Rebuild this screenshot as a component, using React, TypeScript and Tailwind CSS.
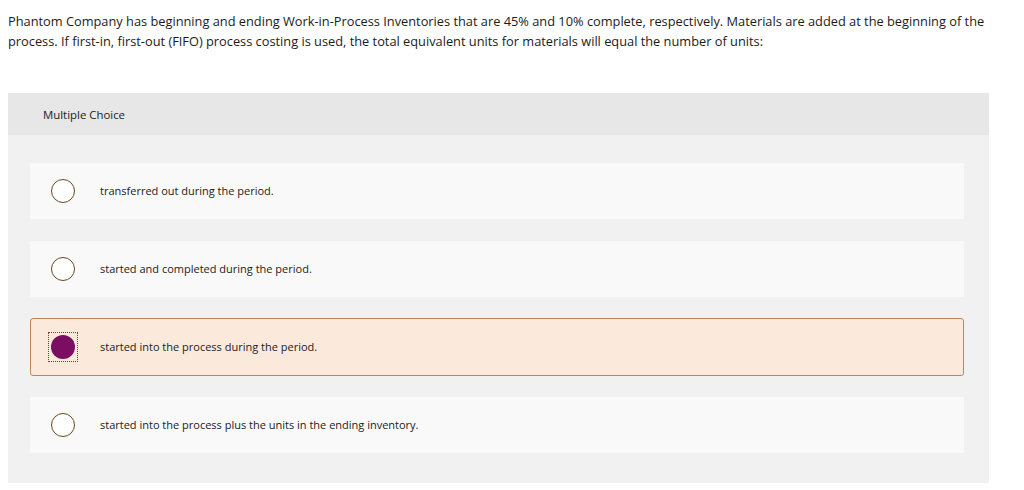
const options = [
  { text: "transferred out during the period.", selected: false },
  { text: "started and completed during the period.", selected: false },
  { text: "started into the process during the period.", selected: true },
  { text: "started into the process plus the units in the ending inventory.", selected: false },
];

function Radio({ selected }: { selected: boolean }) {
  if (selected) {
    return (
      <div className="-mx-[2px] flex h-[30px] w-[30px] items-center justify-center border border-dotted border-[#8a3030]">
        <div className="h-[24px] w-[24px] rounded-full bg-[#7b0d62]" />
      </div>
    );
  }
  return (
    <div className="flex h-[26px] w-[26px] items-center justify-center">
      <div className="h-[24px] w-[24px] rounded-full border-[1.5px] border-[#6a4520] bg-white" />
    </div>
  );
}

export default function App() {
  return (
    <div className="h-[490px] w-[1024px] bg-white text-[#1b1b1b]" style={{ fontFamily: "'Open Sans', 'Liberation Sans', sans-serif" }}>
      <p className="px-2 pt-[11px] text-[12.8px] leading-[20px]">
        Phantom Company has beginning and ending Work-in-Process Inventories that are 45% and 10% complete, respectively. Materials are added at the beginning of the
        <br />
        process. If first-in, first-out (FIFO) process costing is used, the total equivalent units for materials will equal the number of units:
      </p>
      <div className="ml-2 mt-[42px] w-[981px] bg-[#f1f1f1]">
        <div className="flex h-[42px] items-center bg-[#e7e7e7] pl-[35px] pt-px text-[11.4px]">Multiple Choice</div>
        <div className="flex flex-col gap-[22px] pb-[30px] pl-[22px] pr-[25px] pt-[28px]">
          {options.map((o) =>
            o.selected ? (
              <div key={o.text} className="-my-px flex h-[58px] items-center rounded-[3px] border border-[#b9875a] bg-[#fbeadb] pl-[19px] text-[11px]">
                <Radio selected />
                <span className="ml-[24px]">{o.text}</span>
              </div>
            ) : (
              <div key={o.text} className="flex h-[56px] items-center bg-[#f9f9f9] pl-[20px] text-[11px]">
                <Radio selected={false} />
                <span className="ml-[24px]">{o.text}</span>
              </div>
            )
          )}
        </div>
      </div>
    </div>
  );
}
